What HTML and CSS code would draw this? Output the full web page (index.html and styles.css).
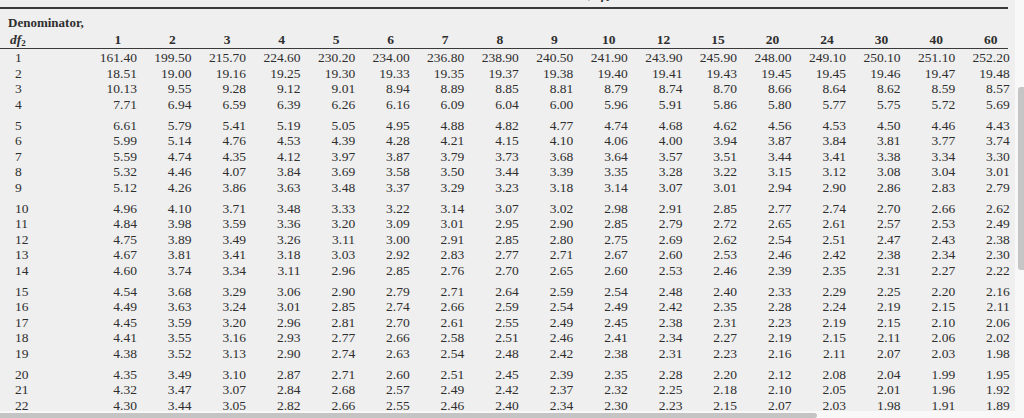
FILE: index.html
```html
<!DOCTYPE html>
<html>
<head>
<meta charset="utf-8">
<link rel="stylesheet" href="styles.css">
</head>
<body>
<div class="frame">
<div class="viewport">
  <div class="caption">Numerator, <i>df</i><sub>1</sub></div>
  <div class="rule"></div>
  <div class="head">
    <div class="denom">Denominator,</div>
    <div class="row hrow">
      <div class="lab"><i>df</i><sub>2</sub></div>
      <div class="c"><span>1</span></div><div class="c"><span>2</span></div><div class="c"><span>3</span></div><div class="c"><span>4</span></div><div class="c"><span>5</span></div><div class="c"><span>6</span></div><div class="c"><span>7</span></div><div class="c"><span>8</span></div><div class="c"><span>9</span></div><div class="c"><span>10</span></div><div class="c"><span>12</span></div><div class="c"><span>15</span></div><div class="c"><span>20</span></div><div class="c"><span>24</span></div><div class="c"><span>30</span></div><div class="c"><span>40</span></div><div class="c"><span>60</span></div>
    </div>
  </div>
  <div class="rule thin"></div>
  <div class="body">
    <div class="group">
      <div class="row"><div class="lab">1</div><div class="c">161.40</div><div class="c">199.50</div><div class="c">215.70</div><div class="c">224.60</div><div class="c">230.20</div><div class="c">234.00</div><div class="c">236.80</div><div class="c">238.90</div><div class="c">240.50</div><div class="c">241.90</div><div class="c">243.90</div><div class="c">245.90</div><div class="c">248.00</div><div class="c">249.10</div><div class="c">250.10</div><div class="c">251.10</div><div class="c">252.20</div></div>
      <div class="row"><div class="lab">2</div><div class="c">18.51</div><div class="c">19.00</div><div class="c">19.16</div><div class="c">19.25</div><div class="c">19.30</div><div class="c">19.33</div><div class="c">19.35</div><div class="c">19.37</div><div class="c">19.38</div><div class="c">19.40</div><div class="c">19.41</div><div class="c">19.43</div><div class="c">19.45</div><div class="c">19.45</div><div class="c">19.46</div><div class="c">19.47</div><div class="c">19.48</div></div>
      <div class="row"><div class="lab">3</div><div class="c">10.13</div><div class="c">9.55</div><div class="c">9.28</div><div class="c">9.12</div><div class="c">9.01</div><div class="c">8.94</div><div class="c">8.89</div><div class="c">8.85</div><div class="c">8.81</div><div class="c">8.79</div><div class="c">8.74</div><div class="c">8.70</div><div class="c">8.66</div><div class="c">8.64</div><div class="c">8.62</div><div class="c">8.59</div><div class="c">8.57</div></div>
      <div class="row"><div class="lab">4</div><div class="c">7.71</div><div class="c">6.94</div><div class="c">6.59</div><div class="c">6.39</div><div class="c">6.26</div><div class="c">6.16</div><div class="c">6.09</div><div class="c">6.04</div><div class="c">6.00</div><div class="c">5.96</div><div class="c">5.91</div><div class="c">5.86</div><div class="c">5.80</div><div class="c">5.77</div><div class="c">5.75</div><div class="c">5.72</div><div class="c">5.69</div></div>
    </div>
    <div class="group">
      <div class="row"><div class="lab">5</div><div class="c">6.61</div><div class="c">5.79</div><div class="c">5.41</div><div class="c">5.19</div><div class="c">5.05</div><div class="c">4.95</div><div class="c">4.88</div><div class="c">4.82</div><div class="c">4.77</div><div class="c">4.74</div><div class="c">4.68</div><div class="c">4.62</div><div class="c">4.56</div><div class="c">4.53</div><div class="c">4.50</div><div class="c">4.46</div><div class="c">4.43</div></div>
      <div class="row"><div class="lab">6</div><div class="c">5.99</div><div class="c">5.14</div><div class="c">4.76</div><div class="c">4.53</div><div class="c">4.39</div><div class="c">4.28</div><div class="c">4.21</div><div class="c">4.15</div><div class="c">4.10</div><div class="c">4.06</div><div class="c">4.00</div><div class="c">3.94</div><div class="c">3.87</div><div class="c">3.84</div><div class="c">3.81</div><div class="c">3.77</div><div class="c">3.74</div></div>
      <div class="row"><div class="lab">7</div><div class="c">5.59</div><div class="c">4.74</div><div class="c">4.35</div><div class="c">4.12</div><div class="c">3.97</div><div class="c">3.87</div><div class="c">3.79</div><div class="c">3.73</div><div class="c">3.68</div><div class="c">3.64</div><div class="c">3.57</div><div class="c">3.51</div><div class="c">3.44</div><div class="c">3.41</div><div class="c">3.38</div><div class="c">3.34</div><div class="c">3.30</div></div>
      <div class="row"><div class="lab">8</div><div class="c">5.32</div><div class="c">4.46</div><div class="c">4.07</div><div class="c">3.84</div><div class="c">3.69</div><div class="c">3.58</div><div class="c">3.50</div><div class="c">3.44</div><div class="c">3.39</div><div class="c">3.35</div><div class="c">3.28</div><div class="c">3.22</div><div class="c">3.15</div><div class="c">3.12</div><div class="c">3.08</div><div class="c">3.04</div><div class="c">3.01</div></div>
      <div class="row"><div class="lab">9</div><div class="c">5.12</div><div class="c">4.26</div><div class="c">3.86</div><div class="c">3.63</div><div class="c">3.48</div><div class="c">3.37</div><div class="c">3.29</div><div class="c">3.23</div><div class="c">3.18</div><div class="c">3.14</div><div class="c">3.07</div><div class="c">3.01</div><div class="c">2.94</div><div class="c">2.90</div><div class="c">2.86</div><div class="c">2.83</div><div class="c">2.79</div></div>
    </div>
    <div class="group">
      <div class="row"><div class="lab">10</div><div class="c">4.96</div><div class="c">4.10</div><div class="c">3.71</div><div class="c">3.48</div><div class="c">3.33</div><div class="c">3.22</div><div class="c">3.14</div><div class="c">3.07</div><div class="c">3.02</div><div class="c">2.98</div><div class="c">2.91</div><div class="c">2.85</div><div class="c">2.77</div><div class="c">2.74</div><div class="c">2.70</div><div class="c">2.66</div><div class="c">2.62</div></div>
      <div class="row"><div class="lab">11</div><div class="c">4.84</div><div class="c">3.98</div><div class="c">3.59</div><div class="c">3.36</div><div class="c">3.20</div><div class="c">3.09</div><div class="c">3.01</div><div class="c">2.95</div><div class="c">2.90</div><div class="c">2.85</div><div class="c">2.79</div><div class="c">2.72</div><div class="c">2.65</div><div class="c">2.61</div><div class="c">2.57</div><div class="c">2.53</div><div class="c">2.49</div></div>
      <div class="row"><div class="lab">12</div><div class="c">4.75</div><div class="c">3.89</div><div class="c">3.49</div><div class="c">3.26</div><div class="c">3.11</div><div class="c">3.00</div><div class="c">2.91</div><div class="c">2.85</div><div class="c">2.80</div><div class="c">2.75</div><div class="c">2.69</div><div class="c">2.62</div><div class="c">2.54</div><div class="c">2.51</div><div class="c">2.47</div><div class="c">2.43</div><div class="c">2.38</div></div>
      <div class="row"><div class="lab">13</div><div class="c">4.67</div><div class="c">3.81</div><div class="c">3.41</div><div class="c">3.18</div><div class="c">3.03</div><div class="c">2.92</div><div class="c">2.83</div><div class="c">2.77</div><div class="c">2.71</div><div class="c">2.67</div><div class="c">2.60</div><div class="c">2.53</div><div class="c">2.46</div><div class="c">2.42</div><div class="c">2.38</div><div class="c">2.34</div><div class="c">2.30</div></div>
      <div class="row"><div class="lab">14</div><div class="c">4.60</div><div class="c">3.74</div><div class="c">3.34</div><div class="c">3.11</div><div class="c">2.96</div><div class="c">2.85</div><div class="c">2.76</div><div class="c">2.70</div><div class="c">2.65</div><div class="c">2.60</div><div class="c">2.53</div><div class="c">2.46</div><div class="c">2.39</div><div class="c">2.35</div><div class="c">2.31</div><div class="c">2.27</div><div class="c">2.22</div></div>
    </div>
    <div class="group">
      <div class="row"><div class="lab">15</div><div class="c">4.54</div><div class="c">3.68</div><div class="c">3.29</div><div class="c">3.06</div><div class="c">2.90</div><div class="c">2.79</div><div class="c">2.71</div><div class="c">2.64</div><div class="c">2.59</div><div class="c">2.54</div><div class="c">2.48</div><div class="c">2.40</div><div class="c">2.33</div><div class="c">2.29</div><div class="c">2.25</div><div class="c">2.20</div><div class="c">2.16</div></div>
      <div class="row"><div class="lab">16</div><div class="c">4.49</div><div class="c">3.63</div><div class="c">3.24</div><div class="c">3.01</div><div class="c">2.85</div><div class="c">2.74</div><div class="c">2.66</div><div class="c">2.59</div><div class="c">2.54</div><div class="c">2.49</div><div class="c">2.42</div><div class="c">2.35</div><div class="c">2.28</div><div class="c">2.24</div><div class="c">2.19</div><div class="c">2.15</div><div class="c">2.11</div></div>
      <div class="row"><div class="lab">17</div><div class="c">4.45</div><div class="c">3.59</div><div class="c">3.20</div><div class="c">2.96</div><div class="c">2.81</div><div class="c">2.70</div><div class="c">2.61</div><div class="c">2.55</div><div class="c">2.49</div><div class="c">2.45</div><div class="c">2.38</div><div class="c">2.31</div><div class="c">2.23</div><div class="c">2.19</div><div class="c">2.15</div><div class="c">2.10</div><div class="c">2.06</div></div>
      <div class="row"><div class="lab">18</div><div class="c">4.41</div><div class="c">3.55</div><div class="c">3.16</div><div class="c">2.93</div><div class="c">2.77</div><div class="c">2.66</div><div class="c">2.58</div><div class="c">2.51</div><div class="c">2.46</div><div class="c">2.41</div><div class="c">2.34</div><div class="c">2.27</div><div class="c">2.19</div><div class="c">2.15</div><div class="c">2.11</div><div class="c">2.06</div><div class="c">2.02</div></div>
      <div class="row"><div class="lab">19</div><div class="c">4.38</div><div class="c">3.52</div><div class="c">3.13</div><div class="c">2.90</div><div class="c">2.74</div><div class="c">2.63</div><div class="c">2.54</div><div class="c">2.48</div><div class="c">2.42</div><div class="c">2.38</div><div class="c">2.31</div><div class="c">2.23</div><div class="c">2.16</div><div class="c">2.11</div><div class="c">2.07</div><div class="c">2.03</div><div class="c">1.98</div></div>
    </div>
    <div class="group">
      <div class="row"><div class="lab">20</div><div class="c">4.35</div><div class="c">3.49</div><div class="c">3.10</div><div class="c">2.87</div><div class="c">2.71</div><div class="c">2.60</div><div class="c">2.51</div><div class="c">2.45</div><div class="c">2.39</div><div class="c">2.35</div><div class="c">2.28</div><div class="c">2.20</div><div class="c">2.12</div><div class="c">2.08</div><div class="c">2.04</div><div class="c">1.99</div><div class="c">1.95</div></div>
      <div class="row"><div class="lab">21</div><div class="c">4.32</div><div class="c">3.47</div><div class="c">3.07</div><div class="c">2.84</div><div class="c">2.68</div><div class="c">2.57</div><div class="c">2.49</div><div class="c">2.42</div><div class="c">2.37</div><div class="c">2.32</div><div class="c">2.25</div><div class="c">2.18</div><div class="c">2.10</div><div class="c">2.05</div><div class="c">2.01</div><div class="c">1.96</div><div class="c">1.92</div></div>
      <div class="row"><div class="lab">22</div><div class="c">4.30</div><div class="c">3.44</div><div class="c">3.05</div><div class="c">2.82</div><div class="c">2.66</div><div class="c">2.55</div><div class="c">2.46</div><div class="c">2.40</div><div class="c">2.34</div><div class="c">2.30</div><div class="c">2.23</div><div class="c">2.15</div><div class="c">2.07</div><div class="c">2.03</div><div class="c">1.98</div><div class="c">1.91</div><div class="c">1.89</div></div>
    </div>
  </div>
</div>
<div class="vthumb"></div>
<div class="hthumb"></div>
</div>
</body>
</html>
```

FILE: styles.css
```css
html, body {
  margin: 0;
  padding: 0;
  background: #f8f8f8;
}
.frame {
  position: relative;
  width: 1024px;
  height: 418px;
  overflow: hidden;
}
.viewport {
  width: 1015px;
  height: 411px;
  overflow: hidden;
  background: #efefef;
  font-family: "Liberation Serif", "Times New Roman", serif;
  color: #2e2e2e;
  font-size: 13.5px;
}
.caption {
  margin-top: -12px;
  height: 14px;
  line-height: 14px;
  padding-left: 527px;
  font-weight: bold;
  font-size: 13px;
}
.caption sub, .lab sub {
  font-size: 9px;
  vertical-align: -2px;
}
.rule {
  margin-top: 5px;
  width: 1008px;
  height: 1.5px;
  background: #3a3a3a;
}
.rule.thin {
  margin-top: 0;
  height: 1.5px;
}
.head {
  padding-top: 6px;
}
.denom {
  padding-left: 8px;
  font-weight: bold;
  font-size: 13px;
  line-height: 16px;
}
.row {
  display: grid;
  grid-template-columns: 82.4px repeat(17, 54.56px);
  line-height: 15.5px;
  height: 15.5px;
}
.hrow {
  font-weight: bold;
  line-height: 17px;
  height: 17px;
}
.hrow .lab {
  padding-left: 10px;
}
.hrow .c span {
  display: inline-block;
  width: 38px;
  text-align: center;
}
.lab {
  padding-left: 15px;
}
.c {
  text-align: right;
  white-space: nowrap;
}
.group {
  margin-top: 5.5px;
}
.group:first-child {
  margin-top: 1px;
}
.vthumb {
  position: absolute;
  left: 1018px;
  top: 87px;
  width: 6px;
  height: 183px;
  border-radius: 3px 0 0 3px;
  background: #c6c6c6;
}
.hthumb {
  position: absolute;
  left: 0;
  top: 413px;
  width: 817px;
  height: 5px;
  border-radius: 0 3px 3px 0;
  background: #c4c4c4;
}
```
